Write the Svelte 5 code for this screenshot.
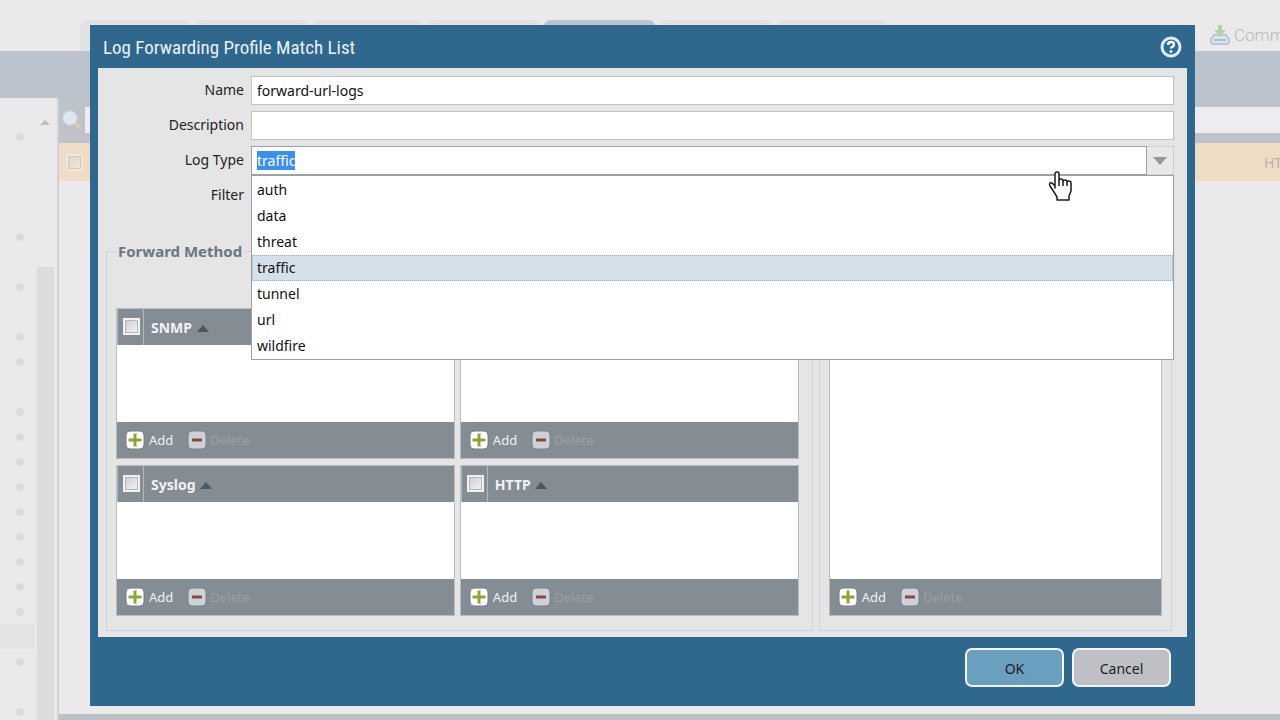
<!--
	Log forwarding profile match list: modal dialog over the dimmed device page.
	The Log Type combo opens with its list expanded and its text selected.
-->

<script lang="ts">
	import { onMount } from 'svelte';

	const tabs = [0, 1, 2, 3, 4, 5, 6];
	const activeTab = 4;

	// one entry per tree row, 1 = row has a bullet, 2 = highlighted row
	const treeRows = [1, 0, 0, 0, 1, 0, 1, 0, 1, 1, 0, 1, 1, 1, 1, 1, 1, 1, 1, 1, 2, 1, 0, 1];

	const logTypes = ['auth', 'data', 'threat', 'traffic', 'tunnel', 'url', 'wildfire'];

	let name = $state('forward-url-logs');
	let description = $state('');
	let logType = $state('traffic');
	let open = $state(true);
	let combo: HTMLInputElement;

	function pick(type: string) {
		logType = type;
		open = false;
	}

	onMount(() => {
		combo.focus();
		combo.select();
	});
</script>

{#snippet grid(title: string)}
	<section class="grid">
		<table class="grid-head">
			<thead>
				<tr>
					<th class="check-col">
						<input class="check" type="checkbox" aria-label="Select all" />
					</th>
					<th>{title} {#if title}<span class="sort"></span>{/if}</th>
				</tr>
			</thead>
		</table>
		<div class="grid-body"></div>
		<div class="grid-foot">
			<button class="tool" type="button">
				<svg width="20" height="20" viewBox="0 0 20 20" aria-hidden="true">
					<rect x="1" y="1" width="18" height="18" rx="4" fill="#fff" stroke="#737c85" />
					<path d="M10 3.500v13M3.500 10h13" stroke="#8fa636" stroke-width="3" />
				</svg>
				Add
			</button>
			<button class="tool" type="button" disabled>
				<svg width="20" height="20" viewBox="0 0 20 20" aria-hidden="true">
					<rect x="1" y="1" width="18" height="18" rx="4" fill="#cfd1d9" stroke="#78818a" />
					<path d="M5 10h10" stroke="#854a44" stroke-width="3" />
				</svg>
				Delete
			</button>
		</div>
	</section>
{/snippet}

<div class="page">
	<header class="top">
		<nav class="tabs">
			{#each tabs as tab}
				<span class="tab" class:active={tab === activeTab}></span>
			{/each}
		</nav>
		<a class="commit" href="#commit">
			<svg width="20" height="20" viewBox="0 0 20 20" aria-hidden="true">
				<path
					d="M4 10h12l3 4v3q0 2-2 2H3q-2 0-2-2v-3z"
					fill="#dbe4ed"
					stroke="#a9bfd0"
					stroke-width="1.500"
				/>
				<path d="M4 15h12" stroke="#a9bfd0" stroke-width="2" />
				<path d="M8 0h4v5h4l-6 7-6-7h4z" fill="#b4d3a4" />
			</svg>
			Commit
		</a>
	</header>
	<div class="band"></div>
	<div class="work">
		<aside class="tree">
			<span class="scroll-up"></span>
			<ul>
				{#each treeRows as row}
					<li class:bullet={row === 1} class:current={row === 2}></li>
				{/each}
			</ul>
			<div class="scroll-thumb"></div>
		</aside>
		<main class="list">
			<div class="list-top"></div>
			<div class="list-search">
				<svg width="20" height="20" viewBox="0 0 20 20" aria-hidden="true">
					<path d="M13 13l5 5" stroke="#e0cfb8" stroke-width="3" />
					<circle cx="8" cy="8" r="7" fill="#dfe7f3" stroke="#d3dae6" />
				</svg>
				<input class="search" type="text" aria-label="Search" />
			</div>
			<div class="list-row">
				<input class="check" type="checkbox" aria-label="Select profile" />
				<span>HTTP</span>
			</div>
			<div class="list-rest"></div>
			<div class="list-foot"></div>
		</main>
	</div>
</div>

<div class="overlay">
	<div class="dialog" role="dialog" aria-modal="true" aria-labelledby="dialog-title">
		<div class="dialog-head">
			<h1 id="dialog-title">Log Forwarding Profile Match List</h1>
			<button class="help" type="button" aria-label="Help">
				<svg width="22" height="22" viewBox="0 0 22 22" aria-hidden="true">
					<circle cx="11" cy="11" r="9" fill="#2a6ba0" stroke="#dcebf7" stroke-width="3" />
					<path
						d="M8 9q0-3 3-3t3 2.500q0 1.500-2 2.500-1 .5-1 1.500"
						fill="none"
						stroke="#fff"
						stroke-width="2.500"
					/>
					<circle cx="11" cy="15.500" r="1.500" fill="#fff" />
				</svg>
			</button>
		</div>

		<div class="dialog-body">
			<form class="fields">
				<label for="name">Name</label>
				<input id="name" class="text" type="text" bind:value={name} />

				<label for="description">Description</label>
				<input id="description" class="text" type="text" bind:value={description} />

				<label for="log-type">Log Type</label>
				<div class="combo">
					<input
						id="log-type"
						class="text combo-text"
						type="text"
						role="combobox"
						aria-expanded={open}
						aria-controls="log-type-list"
						bind:value={logType}
						bind:this={combo}
					/>
					<button
						class="trigger"
						type="button"
						aria-label="Show log types"
						onclick={() => (open = !open)}
					>
						<svg width="14" height="8" viewBox="0 0 14 8" aria-hidden="true">
							<path d="M0 0h14L7 8z" fill="#979799" />
						</svg>
					</button>
					{#if open}
						<ul class="options" id="log-type-list" role="listbox">
							{#each logTypes as type}
								<li
									role="option"
									tabindex="-1"
									aria-selected={type === logType}
									class:selected={type === logType}
									onclick={() => pick(type)}
									onkeydown={(e) => e.key === 'Enter' && pick(type)}
								>
									{type}
								</li>
							{/each}
						</ul>
						<svg class="pointer" width="26" height="32" viewBox="0 0 26 32" aria-hidden="true">
							<path
								d="M7 18V4q0-2 2-2t2 2v6q0-1 2-1t2 2q0-1 2-1t2 2q0-1 2-1t2 2v8l-2 5v4H9v-3l-3-5-4-6q-1-2 0-3 2-1 5 3z"
								fill="#fff"
								stroke="#1c1c1c"
								stroke-width="1.500"
								stroke-linejoin="round"
							/>
							<path d="M11 10v6M15 11v5M19 12v4" stroke="#1c1c1c" stroke-width="1.500" />
						</svg>
					{/if}
				</div>

				<span class="label">Filter</span>
			</form>

			<div class="groups">
				<fieldset class="group methods">
					<legend>Forward Method</legend>
					<div class="grids">
						{@render grid('SNMP')}
						{@render grid('')}
						{@render grid('Syslog')}
						{@render grid('HTTP')}
					</div>
				</fieldset>
				<fieldset class="group actions">
					<div class="grids">
						{@render grid('')}
					</div>
				</fieldset>
			</div>
		</div>

		<div class="dialog-foot">
			<button class="btn btn--ok" type="button">OK</button>
			<button class="btn" type="button">Cancel</button>
		</div>
	</div>
</div>

<style>
	:global(body) {
		background: #ebe9ec;
		font-family: 'Noto Sans', 'Open Sans', sans-serif;
		font-size: 14px;
		color: #222;
	}

	:global(*) {
		box-sizing: border-box;
	}

	ul {
		list-style: none;
		margin: 0;
		padding: 0;
	}

	button,
	input {
		font: inherit;
		color: inherit;
	}

	/* ── Dimmed page ── */
	.page {
		display: flex;
		flex-direction: column;
		height: 100vh;
		overflow: hidden;
	}

	.top {
		display: flex;
		justify-content: space-between;
		height: 51px;
		flex: none;
		padding-left: 80px;
	}

	.tabs {
		display: flex;
		align-items: flex-end;
		gap: 5px;
	}

	.tab {
		width: 111px;
		height: 31px;
		border-radius: 6px 6px 0 0;
		background: #e2e1e4;
	}

	.tab.active {
		background: #b9c5d0;
	}

	.commit {
		display: flex;
		align-items: center;
		gap: 4px;
		width: 70px;
		padding-top: 18px;
		overflow: hidden;
		font-family: Roboto, sans-serif;
		font-size: 17px;
		font-weight: 300;
		color: #b9b8bc;
		text-decoration: none;
	}

	.commit svg {
		flex: none;
	}

	.band {
		height: 47px;
		flex: none;
		background: #bbc3cf;
	}

	.work {
		display: flex;
		flex: 1;
		min-height: 0;
	}

	.tree {
		position: relative;
		width: 59px;
		flex: none;
		padding-top: 26px;
		border-right: 2px solid #d2d0d3;
	}

	.tree li {
		display: flex;
		align-items: center;
		height: 25px;
		width: 34px;
		padding-left: 16px;
	}

	.tree li.bullet::before {
		content: '';
		width: 8px;
		height: 8px;
		border-radius: 50%;
		background: #dcdadd;
	}

	.tree li.current {
		background: #e3e2e4;
	}

	.scroll-up {
		position: absolute;
		top: 22px;
		right: 7px;
		border: 5px solid transparent;
		border-top: 0;
		border-bottom-color: #bcbbbe;
	}

	.scroll-thumb {
		position: absolute;
		top: 169px;
		right: 3px;
		bottom: 0;
		width: 17px;
		background: #dddbde;
	}

	.list {
		display: flex;
		flex-direction: column;
		flex: 1;
		min-width: 0;
	}

	.list-top {
		height: 9px;
		background: #bbc3cb;
	}

	.list-search {
		display: flex;
		align-items: center;
		gap: 3px;
		height: 36px;
		padding: 0 0 10px 3px;
		background: #bfc3c9;
	}

	.search {
		flex: 1;
		height: 26px;
		border: 0;
		background: #eeecf0;
	}

	.list-row {
		display: flex;
		align-items: center;
		justify-content: space-between;
		height: 38px;
		padding-left: 7px;
		background: #eedcc5;
		color: #b9b1a8;
	}

	.list-row span {
		width: 16px;
		overflow: hidden;
	}

	.list-row .check {
		opacity: 0.5;
	}

	.list-rest {
		flex: 1;
	}

	.list-foot {
		height: 6px;
		background: #bcc0c5;
	}

	/* ── Dialog ── */
	.overlay {
		position: fixed;
		inset: 0;
		display: flex;
		padding: 25px 85px 14px 90px;
	}

	.dialog {
		display: flex;
		flex-direction: column;
		flex: 1;
		padding: 0 8px;
		background: #2f678d;
	}

	.dialog-head {
		display: flex;
		align-items: center;
		justify-content: space-between;
		height: 43px;
		padding: 0 5px;
	}

	h1 {
		margin: 0;
		padding-top: 2px;
		font-family: 'Roboto Condensed', Roboto, sans-serif;
		font-size: 19px;
		font-weight: 400;
		color: #e8f1f8;
	}

	.help {
		display: flex;
		padding: 0;
		border: 0;
		background: none;
	}

	.dialog-body {
		display: flex;
		flex-direction: column;
		flex: 1;
		padding: 8px 13px 6px 8px;
		background: #e5e5e6;
	}

	.fields {
		display: grid;
		grid-template-columns: 138px 1fr;
		grid-auto-rows: 29px;
		gap: 6px 7px;
	}

	.fields label,
	.label {
		line-height: 27px;
		text-align: right;
	}

	.text {
		width: 100%;
		height: 29px;
		padding: 0 5px;
		border: 1px solid #c2c2c3;
		border-radius: 0;
		background: #fff;
		color: #111;
		outline: none;
	}

	.text::selection {
		background: #3a8ff0;
		color: #fff;
	}

	.combo {
		position: relative;
		display: flex;
	}

	.combo-text {
		flex: 1;
		min-width: 0;
		border-color: #a0a0a2;
	}

	.trigger {
		display: flex;
		align-items: center;
		justify-content: center;
		width: 27px;
		padding: 0;
		border: 1px solid #cfcfd0;
		border-left: 0;
		background: #e8e8e9;
	}

	.options {
		position: absolute;
		top: 100%;
		left: 0;
		right: 0;
		z-index: 1;
		padding-top: 1px;
		border: 1px solid #a0a0a2;
		background: #fff;
		color: #111;
	}

	.options li {
		height: 26px;
		padding: 0 4px;
		border: 1px solid transparent;
		line-height: 24px;
	}

	.options li.selected {
		border: 1px dotted #a3aab2;
		background: #d4e0ea;
	}

	.pointer {
		position: absolute;
		top: 24px;
		right: 100px;
		z-index: 2;
	}

	/* ── Grids ── */
	.groups {
		display: grid;
		grid-template-columns: 2fr 1fr;
		gap: 6px;
		flex: 1;
		margin: 31px 2px 0 0;
	}

	.group {
		display: flex;
		flex-direction: column;
		min-width: 0;
		margin: 0;
		border: 1px solid #d0d0d2;
	}

	.methods {
		padding: 47px 13px 14px 9px;
	}

	.actions {
		margin-top: 10px;
		padding: 57px 9px 14px 9px;
	}

	legend {
		padding: 0 2px;
		font-size: 15px;
		font-weight: 700;
		line-height: 20px;
		color: #6b7682;
	}

	.grids {
		display: grid;
		grid-template-columns: repeat(auto-fit, minmax(280px, 1fr));
		grid-auto-rows: 1fr;
		gap: 6px 5px;
		flex: 1;
	}

	.grid {
		display: flex;
		flex-direction: column;
		border: 1px solid #b9bcc3;
		background: #fff;
	}

	.grid-head {
		width: 100%;
		height: 36px;
		border-collapse: collapse;
		background: #848c94;
	}

	.grid-head th {
		padding: 0 0 0 7px;
		font-weight: 700;
		font-size: 14px;
		text-align: left;
		color: #f1f2f4;
	}

	.grid-head .check-col {
		width: 26px;
		padding: 0 0 2px 5px;
		border: solid #b4b9be;
		border-width: 0 1px;
	}

	.check {
		appearance: none;
		display: block;
		width: 17px;
		height: 17px;
		margin: 0;
		border: 2px solid #f3f3f5;
		outline: 1px solid #b4b7bc;
		outline-offset: -3px;
		background: linear-gradient(135deg, #cfcfd3, #f4f4f6);
	}

	.sort {
		display: inline-block;
		margin-left: 1px;
		border: 6px solid transparent;
		border-top: 0;
		border-bottom: 7px solid #4d575f;
		vertical-align: 1px;
	}

	.grid-body {
		flex: 1;
	}

	.grid-foot {
		display: flex;
		align-items: center;
		gap: 14px;
		height: 36px;
		padding-left: 8px;
		background: #848c94;
	}

	.tool {
		display: flex;
		align-items: center;
		gap: 4px;
		padding: 0;
		border: 0;
		background: none;
		font-size: 13px;
		color: #f1f2f4;
	}

	.tool:disabled {
		gap: 3px;
		color: #9ba1a9;
	}

	.dialog-foot {
		display: flex;
		justify-content: flex-end;
		gap: 8px;
		height: 69px;
		padding: 11px 16px 0 0;
	}

	.btn {
		width: 99px;
		height: 39px;
		padding: 2px 0 0;
		border: 2px solid #f2f5f9;
		border-radius: 7px;
		background: #bec0c6;
		color: #1c1c1c;
	}

	.btn--ok {
		background: #6a9fc0;
	}
</style>
